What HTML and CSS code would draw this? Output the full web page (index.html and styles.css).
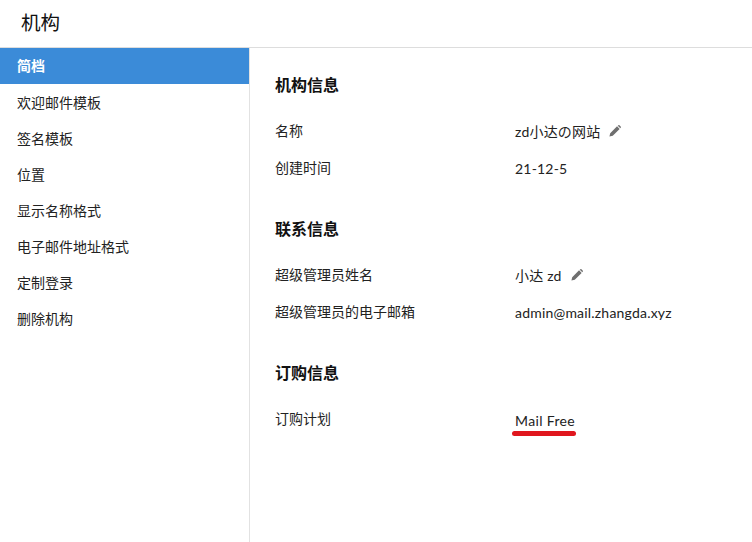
FILE: index.html
```html
<!DOCTYPE html>
<html lang="zh-Hans-CN">
<head>
	<meta charset="UTF-8">
	<title>机构</title>
	<link rel="stylesheet" href="styles.css">
</head>
<body>
<div class="top">
	<h1>机构</h1>
</div>
<div class="main">
	<div class="aside">
		<a class="on">简档</a>
		<a>欢迎邮件模板</a>
		<a>签名模板</a>
		<a>位置</a>
		<a>显示名称格式</a>
		<a>电子邮件地址格式</a>
		<a>定制登录</a>
		<a>删除机构</a>
	</div>
	<div class="con">
		<div class="sec">
			<h2>机构信息</h2>
			<div class="row">
				<span class="key">名称</span>
				<span class="val">zd小达の网站
					<svg class="pen" viewBox="0 0 14 14"><path d="M0.5 13.5 L1.4 9.6 L9.4 1.6 L12.4 4.6 L4.4 12.6 Z M10.2 0.8 L11 0.2 Q11.6 -0.1 12.2 0.4 L13.6 1.8 Q14.1 2.4 13.8 3 L13.2 3.8 Z"/></svg>
				</span>
			</div>
			<div class="row">
				<span class="key">创建时间</span>
				<span class="val">21-12-5</span>
			</div>
		</div>
		<div class="sec">
			<h2>联系信息</h2>
			<div class="row">
				<span class="key">超级管理员姓名</span>
				<span class="val">小达 zd
					<svg class="pen" viewBox="0 0 14 14"><path d="M0.5 13.5 L1.4 9.6 L9.4 1.6 L12.4 4.6 L4.4 12.6 Z M10.2 0.8 L11 0.2 Q11.6 -0.1 12.2 0.4 L13.6 1.8 Q14.1 2.4 13.8 3 L13.2 3.8 Z"/></svg>
				</span>
			</div>
			<div class="row">
				<span class="key">超级管理员的电子邮箱</span>
				<span class="val">admin@mail.zhangda.xyz</span>
			</div>
		</div>
		<div class="sec">
			<h2>订购信息</h2>
			<div class="row">
				<span class="key">订购计划</span>
				<span class="val plan">Mail Free<i class="mark"></i></span>
			</div>
		</div>
	</div>
</div>
</body>
</html>
```

FILE: styles.css
```css
html, body {
    height: 100%;
}

body {
    display: flex;
    flex-direction: column;
    margin: 0;
    overflow: hidden;
    font: 14px/20px Lato, "Noto Sans CJK SC", sans-serif;
    color: #222;
    background: #fff;
}

.top {
    flex: none;
    height: 47px;
    padding-left: 21px;
    border-bottom: 1px solid #ddd;
}

.top h1 {
    margin: 0;
    font-size: 19.5px;
    font-weight: normal;
    line-height: 46px;
    color: #111;
}

.main {
    flex: 1;
    display: flex;
}

.aside {
    flex: none;
    width: 249px;
    border-right: 1px solid #e2e2e2;
}

.aside a {
    display: block;
    height: 36px;
    padding-left: 17px;
    line-height: 38px;
}

.aside .on {
    font-weight: bold;
    line-height: 36px;
    color: #fff;
    background: #3b8bd8;
}

.con {
    flex: 1;
    padding: 27px 0 0 25px;
}

.sec {
    height: 144px;
}

.sec h2 {
    margin: 0 0 26px;
    font-size: 16px;
    font-weight: bold;
    line-height: 20px;
    color: #111;
}

.row {
    display: flex;
    height: 37px;
}

.key {
    flex: none;
    width: 240px;
}

.val {
    display: flex;
    align-items: center;
    gap: 9px;
    height: 20px;
    margin-top: 1px;
    letter-spacing: .2px;
}

.pen {
    width: 12px;
    height: 12px;
    margin-top: -3px;
    fill: #6f6f6f;
}

.plan {
    position: relative;
    margin-top: 2px;
    letter-spacing: .35px;
}

.mark {
    position: absolute;
    top: 20px;
    left: -3px;
    width: 64px;
    height: 5px;
    border-radius: 3px;
    background: #e0161e;
}
```
